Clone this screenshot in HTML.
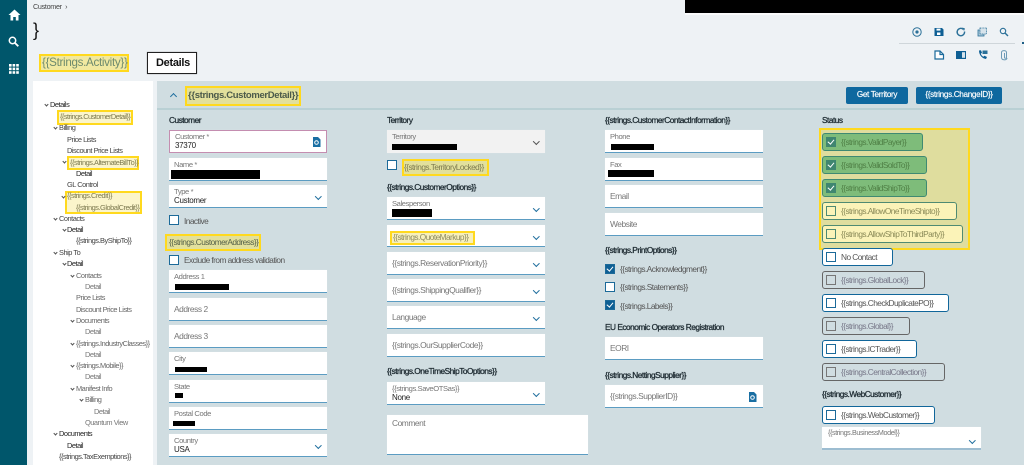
<!DOCTYPE html>
<html><head><meta charset="utf-8"><style>
html,body{margin:0;padding:0}
html{background:#eef2f5}
body{width:1024px;height:465px;overflow:hidden;position:relative;background:#eef2f5;font-family:"Liberation Sans",sans-serif;font-size:8.3px;letter-spacing:-.55px;color:#333;filter:blur(.3px)}
div,span.a,svg.a{position:absolute;box-sizing:border-box}
.t{line-height:12px;white-space:nowrap;height:12px}
.h{font-weight:normal;color:#1f2c33;letter-spacing:-.5px;-webkit-text-stroke:.3px #1f2c33}
.y{background:#f1e9a0;border:2.5px solid #ffd91e;background-clip:padding-box}
.f{background:#fff;border-bottom:1.5px solid #5b9cc2;box-shadow:0 0 1px #d8e4e8}
.c1{left:169px;width:158px}.c2{left:387px;width:158px}.c3{left:605px;width:158px}
.l{position:absolute;left:5px;top:2px;font-size:7.6px;line-height:10px;color:#777;white-space:nowrap;letter-spacing:-.4px}
.v{position:absolute;left:5px;top:11px;font-size:8px;line-height:10px;color:#222;white-space:nowrap;letter-spacing:-.3px}
.p{position:absolute;left:5px;top:5px;font-size:8.4px;line-height:12px;color:#777;white-space:nowrap;letter-spacing:-.45px}
.ch{position:absolute;right:6px;top:9px;width:3.6px;height:3.6px;border-right:1.2px solid #22709f;border-bottom:1.2px solid #22709f;transform:rotate(45deg)}
.k{background:#000}
.cb{width:10px;height:10px;border:1.5px solid #1c6a99;background:#fff}
.cb.on{background:#0e5f94}
.cb.on:after{content:"";position:absolute;left:2.2px;top:.2px;width:2.5px;height:5px;border-right:1.3px solid #fff;border-bottom:1.3px solid #fff;transform:rotate(40deg)}
.s{left:822px;height:18px;border:1.3px solid #11669a;border-radius:3px;background:#fff}
.s .cb{left:3px;top:3px}
.s .x{position:absolute;left:18px;top:2px;line-height:12px;color:#555;white-space:nowrap}
.g{border-color:#666;background:#d0dde1}.g .cb{border-color:#777;background:#d0dde1}.g .x{color:#778}
.tr{font-size:7.4px;color:#444;letter-spacing:-.47px}
.tw{transform:rotate(45deg);width:3px;height:3px;border-right:.9px solid #555;border-bottom:.9px solid #555}
.btn{background:#0e689f;color:#fff;height:17px;top:87px;text-align:center;line-height:16px;border-radius:2px;letter-spacing:-.35px;font-size:8.2px;-webkit-text-stroke:.15px #fff}
</style></head><body>
<!-- nav -->
<div style="left:0;top:0;width:27px;height:465px;background:#00566b"></div>
<svg class="a" style="left:8px;top:9px" width="13" height="12" viewBox="0 0 13 12"><path d="M6.5 0.5L0.5 6H2.5V11.5H5.2V8H7.8V11.5H10.5V6H12.5Z" fill="#fff"/></svg>
<svg class="a" style="left:8px;top:36px" width="11" height="11" viewBox="0 0 11 11"><circle cx="4.5" cy="4.5" r="3.2" fill="none" stroke="#fff" stroke-width="1.5"/><path d="M7 7L10.3 10.3" stroke="#fff" stroke-width="1.8"/></svg>
<svg class="a" style="left:9px;top:64px" width="10" height="10" viewBox="0 0 10 10" fill="#fff"><rect width="2.6" height="2.6"/><rect x="3.6" width="2.6" height="2.6"/><rect x="7.2" width="2.6" height="2.6"/><rect y="3.6" width="2.6" height="2.6"/><rect x="3.6" y="3.6" width="2.6" height="2.6"/><rect x="7.2" y="3.6" width="2.6" height="2.6"/><rect y="7.2" width="2.6" height="2.6"/><rect x="3.6" y="7.2" width="2.6" height="2.6"/><rect x="7.2" y="7.2" width="2.6" height="2.6"/></svg>
<!-- top -->
<div style="left:685px;top:0;width:339px;height:12.5px;background:#000"></div>
<div style="left:685px;top:12.5px;width:339px;height:2px;background:#fafbfc"></div>
<div class="t" style="left:33px;top:1px;font-size:7.2px;color:#444;letter-spacing:-.3px">Customer &nbsp;›</div>
<div style="left:33px;top:19px;font-size:18px;line-height:22px;color:#111;font-weight:normal">}</div>
<div class="y" style="left:39px;top:54px;width:90px;height:18px"></div>
<div class="t" style="left:42px;top:57px;font-size:11.6px;letter-spacing:-.3px;color:#6d8a6d">{{Strings.Activity}}</div>
<div style="left:147px;top:52px;width:50px;height:22px;background:#fff;border:1px solid #222;box-shadow:0 0 1px #888"></div>
<div class="t" style="left:156px;top:57px;font-size:11px;font-weight:bold;letter-spacing:-.3px;color:#111">Details</div>
<!-- toolbar -->
<svg class="a" style="left:905px;top:20px" width="115" height="45" viewBox="905 20 115 45" fill="none" stroke="#2a7098">
<circle cx="917" cy="32" r="4.2" stroke-width="1"/><circle cx="917" cy="32" r="1.6" fill="#2a7098" stroke="none"/>
<path d="M934.5 28H942L943.5 29.5V36H934.5Z" fill="#0e5f94" stroke="none"/><rect x="936.5" y="28.6" width="4" height="2" fill="#fff" stroke="none"/><rect x="937" y="32.5" width="3.4" height="2.5" fill="#fff" stroke="none"/>
<path d="M964.5 31.5A3.7 3.7 0 1 1 963.3 29.3" stroke-width="1.4"/><path d="M962.3 27.5L965 28.5L964 31Z" fill="#2a7098" stroke="none"/>
<rect x="978" y="30" width="6" height="6" fill="#a9c6d8" stroke-width=".8"/><rect x="980" y="28" width="6.5" height="6" fill="#d6e3eb" stroke-width=".8" stroke-dasharray="1 .6"/>
<circle cx="1003" cy="31" r="2.7" stroke-width="1.1"/><path d="M1005 33L1008 36" stroke-width="1.4"/>
<path d="M935 51H940L943.5 54.5V59H935Z" fill="#fff" stroke="#1a6a9b" stroke-width="1.2"/><path d="M940 51V54.5H943.5" stroke="#1a6a9b" stroke-width="1.2"/>
<rect x="956" y="51" width="10" height="8" fill="#0e5f94" stroke="none"/><rect x="962" y="52.2" width="3" height="5.6" fill="#d6e3eb" stroke="none"/>
<path d="M979 50.5C979 55 982 58.500 986 59L987 57L984.500 55.800L983.300 56.800C982 56 981.200 55 980.800 53.800L982 52.800L981 50.300Z" fill="#0e5f94" stroke="none"/><rect x="982.500" y="50.500" width="5" height="3.500" fill="#2a7098" stroke="none"/>
<path d="M1004.500 53V57.500C1004.500 58.500 1006.500 58.500 1006.500 57.500V52.500C1006.500 50 1001.500 50 1001.500 52.500V57.500C1001.500 60.500 1007 60.500 1007 58" stroke="#6c9ab6" stroke-width="1"/>
</svg>
<div style="left:899px;top:43px;width:116px;height:1px;background:#cfd6da"></div>
<div style="left:1022px;top:42px;width:2px;height:2px;background:#1f5f86"></div>
<!-- tree -->
<div style="left:33px;top:81px;width:120px;height:384px;background:#fff"></div>
<div class="y" style="left:57px;top:110px;width:76px;height:15px;background-color:#fbf5cb"></div>
<div class="y" style="left:67px;top:156px;width:72px;height:14px;background-color:#fbf5cb"></div>
<div class="y" style="left:65px;top:191px;width:77px;height:23px;background-color:#fbf5cb"></div>
<div class="tw" style="left:45px;top:103px"></div><div class="t tr" style="left:50px;top:99px;color:#222">Details</div>
<div class="t tr" style="left:60px;top:111px;color:#7d7a50;letter-spacing:-.55px">{{strings.CustomerDetail}}</div>
<div class="tw" style="left:54px;top:126px"></div><div class="t tr" style="left:59px;top:122px">Billing</div>
<div class="t tr" style="left:67px;top:134px">Price Lists</div>
<div class="t tr" style="left:67px;top:145px">Discount Price Lists</div>
<div class="tw" style="left:63px;top:160px"></div><div class="t tr" style="left:70px;top:157px;color:#7d7a50">{{strings.AlternateBillTo}}</div>
<div class="t tr" style="left:76px;top:168px;color:#222">Detail</div>
<div class="t tr" style="left:67px;top:179px">GL Control</div>
<div class="tw" style="left:62px;top:195px"></div><div class="t tr" style="left:67px;top:190px;color:#7d7a50">{{strings.Credit}}</div>
<div class="t tr" style="left:76px;top:202px;color:#7d7a50">{{strings.GlobalCredit}}</div>
<div class="tw" style="left:54px;top:217px"></div><div class="t tr" style="left:59px;top:213px">Contacts</div>
<div class="tw" style="left:63px;top:228px"></div><div class="t tr" style="left:67px;top:224px;color:#222">Detail</div>
<div class="t tr" style="left:76px;top:235px">{{strings.ByShipTo}}</div>
<div class="tw" style="left:54px;top:251px"></div><div class="t tr" style="left:59px;top:247px">Ship To</div>
<div class="tw" style="left:63px;top:262px"></div><div class="t tr" style="left:67px;top:258px;color:#222">Detail</div>
<div class="tw" style="left:71px;top:274px"></div><div class="t tr" style="left:76px;top:270px;color:#666">Contacts</div>
<div class="t tr" style="left:85px;top:281px;color:#777">Detail</div>
<div class="t tr" style="left:76px;top:292px;color:#666">Price Lists</div>
<div class="t tr" style="left:76px;top:304px;color:#666">Discount Price Lists</div>
<div class="tw" style="left:71px;top:319px"></div><div class="t tr" style="left:76px;top:315px;color:#666">Documents</div>
<div class="t tr" style="left:85px;top:326px;color:#777">Detail</div>
<div class="tw" style="left:71px;top:342px"></div><div class="t tr" style="left:76px;top:338px;color:#666">{{strings.IndustryClasses}}</div>
<div class="t tr" style="left:85px;top:349px;color:#777">Detail</div>
<div class="tw" style="left:71px;top:364px"></div><div class="t tr" style="left:76px;top:360px;color:#666">{{strings.Mobile}}</div>
<div class="t tr" style="left:85px;top:371px;color:#777">Detail</div>
<div class="tw" style="left:71px;top:387px"></div><div class="t tr" style="left:76px;top:383px;color:#666">Manifest Info</div>
<div class="tw" style="left:80px;top:398px"></div><div class="t tr" style="left:85px;top:394px;color:#666">Billing</div>
<div class="t tr" style="left:94px;top:406px;color:#777">Detail</div>
<div class="t tr" style="left:85px;top:417px;color:#777">Quantum View</div>
<div class="tw" style="left:54px;top:432px"></div><div class="t tr" style="left:59px;top:428px;color:#222">Documents</div>
<div class="t tr" style="left:67px;top:440px;color:#222">Detail</div>
<div class="t tr" style="left:59px;top:451px">{{strings.TaxExemptions}}</div>
<!-- main -->
<div style="left:157px;top:81px;width:867px;height:384px;background:#d0dde1"></div>
<div style="left:157px;top:108px;width:867px;height:1.500px;background:#b9d0d4"></div>
<div style="left:171px;top:94px;width:5px;height:5px;border-left:1.300px solid #1f6f9f;border-top:1.300px solid #1f6f9f;transform:rotate(45deg)"></div>
<div class="y" style="left:185px;top:86px;width:116px;height:20px;background-color:#e2e09c"></div>
<div class="t" style="left:188px;top:90px;font-size:9.500px;font-weight:bold;letter-spacing:-.35px;color:#4b5a4a">{{strings.CustomerDetail}}</div>
<div class="btn" style="left:846px;width:62px">Get Territory</div>
<div class="btn" style="left:916px;width:86px">{{strings.ChangeID}}</div>
<!-- col1 -->
<div class="t h" style="left:169px;top:114px">Customer</div>
<div class="f c1" style="top:130px;height:23px;background:#fff;border:1px solid #c48db0"><span class="l" style="left:5px;top:1px">Customer *</span><span class="v" style="left:5px;top:10px">37370</span></div>
<svg class="a" style="left:312px;top:137px" width="9" height="10" viewBox="0 0 9 10"><path d="M1 0H6L8.500 2.500V10H1Z" fill="#1a6fa3"/><circle cx="4.500" cy="5.500" r="1.800" fill="none" stroke="#fff" stroke-width="1"/></svg>
<div class="f c1" style="top:158px;height:23px"><span class="l">Name *</span></div>
<div class="k" style="left:171px;top:170px;width:89px;height:9px"></div>
<div class="f c1" style="top:185px;height:23px"><span class="l">Type *</span><span class="v">Customer</span><span class="ch"></span></div>
<div class="cb" style="left:169px;top:215px"></div><div class="t" style="left:184px;top:215px;color:#555">Inactive</div>
<div class="y" style="left:165px;top:234px;width:96px;height:17px;background-color:#e2e09c"></div>
<div class="t" style="left:169px;top:236px;color:#55604a">{{strings.CustomerAddress}}</div>
<div class="cb" style="left:169px;top:255px"></div><div class="t" style="left:184px;top:254px;color:#555">Exclude from address validation</div>
<div class="f c1" style="top:270px;height:23px"><span class="l">Address 1</span></div>
<div class="k" style="left:175px;top:284px;width:54px;height:6px"></div>
<div class="f c1" style="top:298px;height:23px"><span class="p">Address 2</span></div>
<div class="f c1" style="top:325px;height:23px"><span class="p">Address 3</span></div>
<div class="f c1" style="top:352px;height:23px"><span class="l">City</span></div>
<div class="k" style="left:175px;top:367px;width:32px;height:5px"></div>
<div class="f c1" style="top:380px;height:23px"><span class="l">State</span></div>
<div class="k" style="left:175px;top:393px;width:8px;height:5px"></div>
<div class="f c1" style="top:407px;height:23px"><span class="l">Postal Code</span></div>
<div class="k" style="left:173px;top:421px;width:22px;height:5px"></div>
<div class="f c1" style="top:434px;height:23px"><span class="l">Country</span><span class="v">USA</span><span class="ch"></span></div>
<!-- col2 -->
<div class="t h" style="left:387px;top:114px">Territory</div>
<div class="f c2" style="top:130px;height:23px;background:#f2f2f2;border-bottom:none"><span class="l">Territory</span><span class="ch" style="border-color:#555"></span></div>
<div class="k" style="left:392px;top:144px;width:65px;height:6px"></div>
<div class="cb" style="left:387px;top:160px"></div>
<div class="y" style="left:402px;top:159px;width:87px;height:17px;background-color:#e2e09c"></div>
<div class="t" style="left:404px;top:161px;color:#7d7a50">{{strings.TerritoryLocked}}</div>
<div class="t h" style="left:387px;top:181px">{{strings.CustomerOptions}}</div>
<div class="f c2" style="top:197px;height:23px"><span class="l">Salesperson</span><span class="ch"></span></div>
<div class="k" style="left:392px;top:209px;width:40px;height:8px"></div>
<div class="f c2" style="top:225px;height:22px"><span class="ch"></span></div>
<div class="y" style="left:390px;top:231px;width:85px;height:14px;background-color:#f7f0bc"></div>
<div class="t" style="left:393px;top:231px;color:#8d8a60">{{strings.QuoteMarkup}}</div>
<div class="f c2" style="top:252px;height:23px"><span class="p">{{strings.ReservationPriority}}</span><span class="ch"></span></div>
<div class="f c2" style="top:279px;height:23px"><span class="p">{{strings.ShippingQualifier}}</span><span class="ch"></span></div>
<div class="f c2" style="top:306px;height:23px"><span class="p">Language</span><span class="ch"></span></div>
<div class="f c2" style="top:334px;height:23px"><span class="p">{{strings.OurSupplierCode}}</span></div>
<div class="t h" style="left:387px;top:365px">{{strings.OneTimeShipToOptions}}</div>
<div class="f c2" style="top:382px;height:23px"><span class="l">{{strings.SaveOTSas}}</span><span class="v">None</span><span class="ch"></span></div>
<div class="f" style="left:387px;top:415px;width:201px;height:40px"><span class="p" style="top:2px">Comment</span></div>
<!-- col3 -->
<div class="t h" style="left:605px;top:114px">{{strings.CustomerContactInformation}}</div>
<div class="f c3" style="top:130px;height:23px"><span class="l">Phone</span></div>
<div class="k" style="left:611px;top:144px;width:43px;height:6px"></div>
<div class="f c3" style="top:158px;height:23px"><span class="l">Fax</span></div>
<div class="k" style="left:608px;top:170px;width:46px;height:7px"></div>
<div class="f c3" style="top:185px;height:23px"><span class="p">Email</span></div>
<div class="f c3" style="top:213px;height:23px"><span class="p">Website</span></div>
<div class="t h" style="left:605px;top:244px">{{strings.PrintOptions}}</div>
<div class="cb on" style="left:605px;top:264px"></div><div class="t" style="left:620px;top:263px;color:#555">{{strings.Acknowledgment}}</div>
<div class="cb" style="left:605px;top:282px"></div><div class="t" style="left:620px;top:281px;color:#555">{{strings.Statements}}</div>
<div class="cb on" style="left:605px;top:300px"></div><div class="t" style="left:620px;top:300px;color:#555">{{strings.Labels}}</div>
<div class="t h" style="left:605px;top:321px">EU Economic Operators Registration</div>
<div class="f c3" style="top:337px;height:23px"><span class="p">EORI</span></div>
<div class="t h" style="left:605px;top:369px">{{strings.NettingSupplier}}</div>
<div class="f c3" style="top:385px;height:23px"><span class="p">{{strings.SupplierID}}</span></div>
<svg class="a" style="left:748px;top:392px" width="9" height="10" viewBox="0 0 9 10"><path d="M1 0H6L8.500 2.500V10H1Z" fill="#1a6fa3"/><circle cx="4.500" cy="5.500" r="1.800" fill="none" stroke="#fff" stroke-width="1"/></svg>
<!-- status -->
<div class="t h" style="left:822px;top:114px">Status</div>
<div class="y" style="left:819px;top:128px;width:151px;height:122px;background:#dfdd9e;border-width:2.500px"></div>
<div class="s" style="top:133px;width:101px;background:#7ebc7a;border-color:#3f8a72"><span class="a cb on" style="background:#3f8670;border-color:#3f8670"></span><span class="x" style="color:#4f7f45">{{strings.ValidPayer}}</span></div>
<div class="s" style="top:156px;width:105px;background:#7ebc7a;border-color:#3f8a72"><span class="a cb on" style="background:#3f8670;border-color:#3f8670"></span><span class="x" style="color:#4f7f45">{{strings.ValidSoldTo}}</span></div>
<div class="s" style="top:179px;width:105px;background:#7ebc7a;border-color:#3f8a72"><span class="a cb on" style="background:#3f8670;border-color:#3f8670"></span><span class="x" style="color:#4f7f45">{{strings.ValidShipTo}}</span></div>
<div class="s" style="top:202px;width:135px;background:#fbf3b8;border-color:#4f8a72"><span class="a cb" style="background:#fbf3b8;border-color:#4f8a72"></span><span class="x" style="color:#8a8a58">{{strings.AllowOneTimeShipto}}</span></div>
<div class="s" style="top:225px;width:141px;background:#fbf3b8;border-color:#4f8a72"><span class="a cb" style="background:#fbf3b8;border-color:#4f8a72"></span><span class="x" style="color:#8a8a58">{{strings.AllowShipToThirdParty}}</span></div>
<div class="s" style="top:248px;width:71px"><span class="a cb"></span><span class="x">No Contact</span></div>
<div class="s g" style="top:271px;width:103px"><span class="a cb"></span><span class="x">{{strings.GlobalLock}}</span></div>
<div class="s" style="top:294px;width:127px"><span class="a cb"></span><span class="x">{{strings.CheckDuplicatePO}}</span></div>
<div class="s g" style="top:317px;width:88px"><span class="a cb"></span><span class="x">{{strings.Global}}</span></div>
<div class="s" style="top:340px;width:95px"><span class="a cb"></span><span class="x">{{strings.ICTrader}}</span></div>
<div class="s g" style="top:363px;width:123px"><span class="a cb"></span><span class="x">{{strings.CentralCollection}}</span></div>
<div class="t h" style="left:822px;top:388px">{{strings.WebCustomer}}</div>
<div class="s" style="top:406px;width:113px"><span class="a cb"></span><span class="x">{{strings.WebCustomer}}</span></div>
<div class="f" style="left:822px;top:427px;width:159px;height:23px;border-bottom:2px solid #9dbdd1"><span class="l" style="left:6px;top:1px;font-size:7.200px">{{strings.BusinessModel}}</span><span class="ch" style="top:11px"></span></div>
</body></html>
